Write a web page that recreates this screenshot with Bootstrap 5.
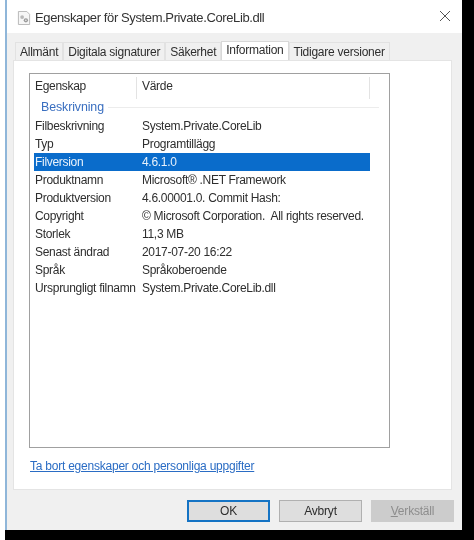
<!DOCTYPE html>
<html lang="sv">
<head>
<meta charset="utf-8">
<title>Egenskaper</title>
<link href="https://cdn.jsdelivr.net/npm/bootstrap@5.3.0/dist/css/bootstrap.min.css" rel="stylesheet">
<style>
html,body{margin:0;padding:0;width:474px;height:540px;overflow:hidden;background:#000;}
body{font-family:"Liberation Sans",Arial,sans-serif;font-size:12px;letter-spacing:-.3px;color:#2e2e2e;}
.stage{width:474px;height:540px;background:#000;}
.gutter{width:5px;background:#fff;height:540px;flex:none;}
.win{width:457px;height:530px;background:#f0f0f0;border-left:2px solid #8fb6d9;flex:none;filter:blur(.3px);}
.titlebar{height:33px;background:#fff;padding:2px 0 0 10px;}
.titletext{font-size:13px;letter-spacing:-.38px;color:#333;margin-left:4px;}
.closer{margin-left:auto;margin-right:11px;margin-top:-3px;width:12px;height:12px;}
.tabsbar{height:27px;padding:9px 0 0 8px;border:0;}
.tabsbar .nav-link{font-size:12px;letter-spacing:-.25px;line-height:17px;height:18px;padding:1px 4px 0;color:#2e2e2e;background:#f0f0f0;border:1px solid #e2e2e2;border-bottom:0;border-radius:0;margin:0;}
.tabsbar .nav-link.active{background:#fff;height:19px;margin-top:-1px;padding:0 4px;border-color:#d8d8d8;color:#2e2e2e;z-index:1;position:relative;}
.panel{margin-left:6px;width:439px;height:430px;background:#fff;border:1px solid #e4e4e4;padding:12px 0 0 15px;}
.listbox{width:361px;height:375px;border:1px solid #a0a0a0;background:#fff;padding:0 0 0 4px;}
.headrow{height:24px;padding-top:3px;line-height:18px;width:336px;}
.namecell{width:103px;flex:none;padding-left:1px;white-space:nowrap;}
.valcell{flex:1;padding-left:5px;white-space:nowrap;}
.headrow .namecell{border-right:1px solid #e3e3e3;height:22px;}
.headrow .valcell{border-right:1px solid #e3e3e3;height:22px;padding-left:5px;}
.groupline{height:18px;line-height:16px;margin-bottom:1px;width:345px;padding-left:7px;}
.groupname{color:#3a6fc0;font-size:12.4px;letter-spacing:-.1px;padding-right:4px;}
.grouprule{flex:1;height:1px;background:#ececec;}
.datarow{height:18px;line-height:18px;width:336px;}
.datarow.chosen{background:#0a6ccb;color:#e8f1fb;}
.linkrow{padding:11px 0 0 1px;line-height:14px;}
.linkrow a{color:#2a6cc4;font-size:12px;letter-spacing:-.23px;text-decoration:underline;}
.btnrow{padding:10px 0 0 0;margin-left:180px;width:267px;gap:9px;}
.winbtn{width:83px;height:22px;padding:0;font-size:12px;letter-spacing:-.2px;line-height:20px;border-radius:0;background:#dedede;border:1px solid #b0b0b0;color:#2e2e2e;}
.winbtn:hover{background:#dedede;color:#2e2e2e;border-color:#b0b0b0;}
.winbtn.mainbtn{border:2px solid #1473c4;line-height:18px;}
.winbtn.offbtn{background:#cccccc;border-color:#cccccc;color:#8d8d8d;opacity:1;}
</style>
</head>
<body>
<div class="stage d-flex align-items-start">
  <div class="gutter"></div>
  <div class="win d-flex flex-column">
    <div class="titlebar d-flex align-items-center">
      <svg width="14" height="14" viewBox="0 0 15 15" aria-hidden="true">
        <path d="M1.5 .5H10.5L13.5 3.5V14.5H1.5Z" fill="#f6f6f6" stroke="#b5b5b5"/>
        <circle cx="5.5" cy="6.5" r="2" fill="#b9b9b9"/>
        <circle cx="9.5" cy="10" r="2.3" fill="#9a9a9a"/>
        <circle cx="9.5" cy="10" r=".8" fill="#f6f6f6"/>
      </svg>
      <span class="titletext">Egenskaper för System.Private.CoreLib.dll</span>
      <svg class="closer" viewBox="0 0 12 12" aria-hidden="true"><path d="M1 1L11 11M11 1L1 11" stroke="#555" stroke-width="1" fill="none"/></svg>
    </div>
    <ul class="nav nav-tabs tabsbar">
      <li class="nav-item"><a class="nav-link" href="#">Allmänt</a></li>
      <li class="nav-item"><a class="nav-link" href="#">Digitala signaturer</a></li>
      <li class="nav-item"><a class="nav-link" href="#">Säkerhet</a></li>
      <li class="nav-item"><a class="nav-link active" href="#">Information</a></li>
      <li class="nav-item"><a class="nav-link" href="#">Tidigare versioner</a></li>
    </ul>
    <div class="panel">
      <div class="listbox">
        <div class="headrow d-flex"><div class="namecell">Egenskap</div><div class="valcell">Värde</div></div>
        <div class="groupline d-flex align-items-center"><span class="groupname">Beskrivning</span><span class="grouprule"></span></div>
        <div class="datarow d-flex"><div class="namecell">Filbeskrivning</div><div class="valcell">System.Private.CoreLib</div></div>
        <div class="datarow d-flex"><div class="namecell">Typ</div><div class="valcell">Programtillägg</div></div>
        <div class="datarow chosen d-flex"><div class="namecell">Filversion</div><div class="valcell">4.6.1.0</div></div>
        <div class="datarow d-flex"><div class="namecell">Produktnamn</div><div class="valcell">Microsoft® .NET Framework</div></div>
        <div class="datarow d-flex"><div class="namecell">Produktversion</div><div class="valcell">4.6.00001.0. Commit Hash:</div></div>
        <div class="datarow d-flex"><div class="namecell">Copyright</div><div class="valcell">© Microsoft Corporation.&nbsp; All rights reserved.</div></div>
        <div class="datarow d-flex"><div class="namecell">Storlek</div><div class="valcell">11,3 MB</div></div>
        <div class="datarow d-flex"><div class="namecell">Senast ändrad</div><div class="valcell">2017-07-20 16:22</div></div>
        <div class="datarow d-flex"><div class="namecell">Språk</div><div class="valcell">Språkoberoende</div></div>
        <div class="datarow d-flex"><div class="namecell">Ursprungligt filnamn</div><div class="valcell">System.Private.CoreLib.dll</div></div>
      </div>
      <div class="linkrow"><a href="#">Ta bort egenskaper och personliga uppgifter</a></div>
    </div>
    <div class="btnrow d-flex">
      <button type="button" class="btn winbtn mainbtn">OK</button>
      <button type="button" class="btn winbtn">Avbryt</button>
      <button type="button" class="btn winbtn offbtn" disabled><u>V</u>erkställ</button>
    </div>
  </div>
</div>
<script src="https://cdn.jsdelivr.net/npm/bootstrap@5.3.0/dist/js/bootstrap.bundle.min.js"></script>
</body>
</html>
